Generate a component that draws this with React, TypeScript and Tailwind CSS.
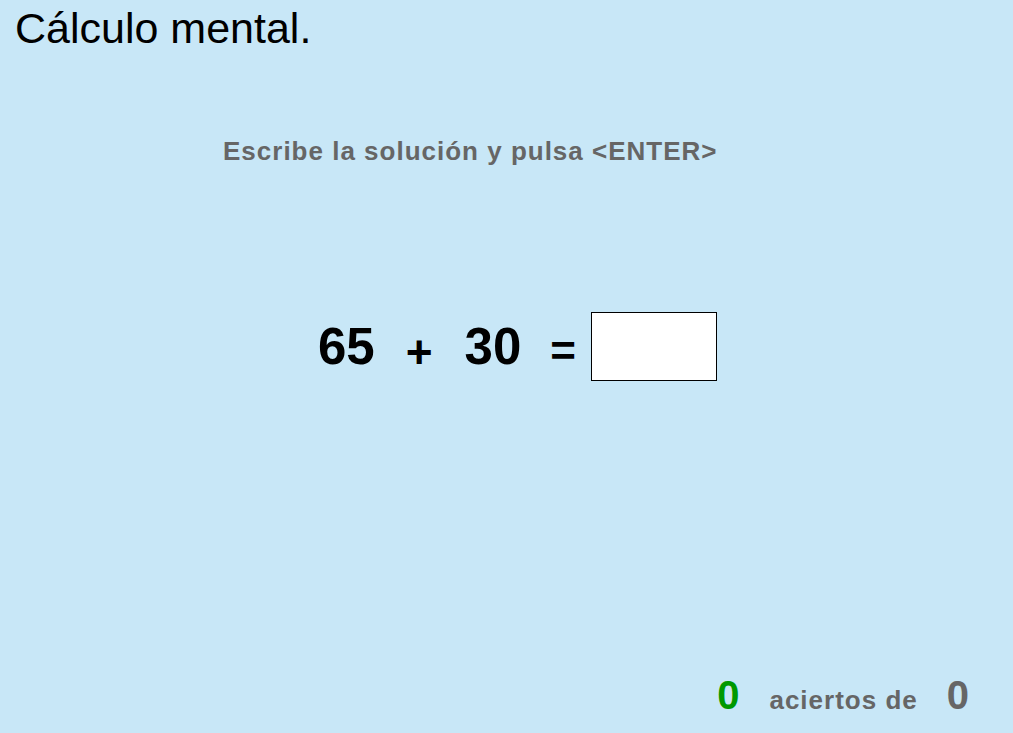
import { useState } from "react";

const font = { fontFamily: '"Liberation Sans", Arial, sans-serif' };

export default function App() {
  const [answer, setAnswer] = useState("");

  return (
    <div
      className="flex h-[733px] w-full flex-col overflow-hidden bg-[#c8e7f7]"
      style={font}
    >
      {/* title */}
      <h1 className="pl-[15px] pt-[7px] text-[43px] font-normal leading-none text-black">
        Cálculo mental.
      </h1>

      {/* instructions */}
      <p className="mt-[88px] pl-[223px] text-[26px] font-bold leading-none tracking-[1px] text-[#666666]">
        Escribe la solución y pulsa &lt;ENTER&gt;
      </p>

      {/* operation */}
      <div className="mt-[148px] flex h-[69px] items-center pl-[318px]">
        <span className="text-[51px] font-bold leading-none text-black">65</span>
        <span className="ml-[31px] mt-[10px] text-[46px] font-bold leading-none text-black">
          +
        </span>
        <span className="ml-[32px] text-[51px] font-bold leading-none text-black">30</span>
        <span className="ml-[29px] mt-[8px] text-[44px] font-bold leading-none text-black">
          =
        </span>
        <input
          type="text"
          value={answer}
          onChange={(e) => setAnswer(e.target.value)}
          className="ml-[15px] h-[69px] w-[126px] border border-black bg-white px-2 text-center text-[40px] font-bold text-black outline-none"
          style={font}
        />
      </div>

      {/* score */}
      <div className="mt-auto flex items-baseline justify-end pb-[18px] pr-[44px]">
        <span className="text-[40px] font-bold leading-none text-[#009900]">0</span>
        <span className="ml-[30px] text-[26px] font-bold leading-none tracking-[1px] text-[#666666]">
          aciertos de
        </span>
        <span className="ml-[29px] text-[40px] font-bold leading-none text-[#666666]">0</span>
      </div>
    </div>
  );
}
